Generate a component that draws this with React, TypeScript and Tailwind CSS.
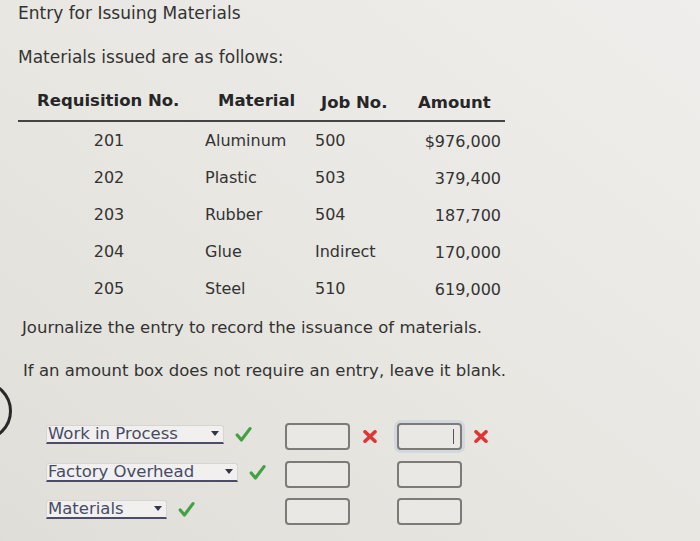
import React from "react";

const rows = [
  ["201", "Aluminum", "500", "$976,000"],
  ["202", "Plastic", "503", "379,400"],
  ["203", "Rubber", "504", "187,700"],
  ["204", "Glue", "Indirect", "170,000"],
  ["205", "Steel", "510", "619,000"],
];

function Check() {
  return (
    <svg width="17" height="17" viewBox="0 0 17 17" className="shrink-0">
      <path d="M2.2 9 L6.4 14 L15 2.6" fill="none" stroke="#45a045" strokeWidth="3.2" strokeLinecap="round" strokeLinejoin="round" />
    </svg>
  );
}

function Cross() {
  return (
    <svg width="14" height="13" viewBox="0 0 14 13" className="shrink-0">
      <path d="M2 1.8 L12 11.2 M12 1.8 L2 11.2" fill="none" stroke="#e03535" strokeWidth="3.6" strokeLinecap="round" />
    </svg>
  );
}

function Select({ label, width }: { label: string; width: string }) {
  return (
    <div
      className={`${width} h-[19px] flex items-end justify-between bg-[#f1f0ef] border border-[#d6d5d3] border-b-2 border-b-[#4a4d63] rounded-t-[3px] pl-[1px] pr-[4px] shrink-0`}
    >
      <span className="text-[16.5px] leading-[17px] text-[#474b66] whitespace-nowrap">{label}</span>
      <svg width="8" height="5" viewBox="0 0 8 5" className="mb-[6px]">
        <path d="M0 0 L8 0 L4 5 Z" fill="#33364a" />
      </svg>
    </div>
  );
}

function Box({ focused }: { focused?: boolean }) {
  return (
    <div
      className={`w-[65px] h-[27px] rounded-[4px] border-2 border-[#7c7b79] bg-[#e9e8e4] shrink-0 flex items-center justify-end pr-[6px] ${
        focused ? "ring-[3px] ring-[#d3d8de]" : ""
      }`}
    >
      {focused && <div className="w-[1.5px] h-[15px] bg-[#555]" />}
    </div>
  );
}

export default function App() {
  return (
    <div className="relative w-[700px] h-[541px] overflow-hidden bg-linear-to-tr from-[#e0ded8] via-[#e8e7e2] to-[#efeeec] font-['DejaVu_Sans',Verdana,sans-serif] text-[#333333] pl-[18px] pt-[3px]">
      {/* partial circle at left edge */}
      <div className="absolute left-[-48px] top-[381px] w-[60px] h-[60px] rounded-full border-[3px] border-[#2a2827]" />

      <div className="text-[17px] leading-[20px]">Entry for Issuing Materials</div>
      <div className="mt-[24px] text-[17px] leading-[20px]">Materials issued are as follows:</div>

      <div className="mt-[24px] w-[487px] grid grid-cols-[182px_105px_100px_100px] text-[16px] leading-[20px]">
        <div className="font-bold text-[16.5px] text-[#262626] pl-[19px] pb-[7px] border-b-2 border-[#444] whitespace-nowrap">Requisition No.</div>
        <div className="font-bold text-[16.5px] text-[#262626] pl-[18px] pb-[7px] border-b-2 border-[#444] whitespace-nowrap">Material</div>
        <div className="font-bold text-[16.5px] text-[#262626] pl-[16px] pb-[7px] border-b-2 border-[#444] whitespace-nowrap pt-[2px]">Job No.</div>
        <div className="font-bold text-[16.5px] text-[#262626] pl-[13px] pb-[7px] border-b-2 border-[#444] whitespace-nowrap pt-[2px]">Amount</div>
        {rows.map((r) => (
          <React.Fragment key={r[0]}>
            <div className="h-[37px] flex items-center justify-center">{r[0]}</div>
            <div className="h-[37px] flex items-center pl-[5px]">{r[1]}</div>
            <div className="h-[37px] flex items-center pl-[10px]">{r[2]}</div>
            <div className="h-[37px] flex items-center justify-end pr-[4px] pt-[3px]">{r[3]}</div>
          </React.Fragment>
        ))}
      </div>

      <div className="mt-[11px] ml-[4px] text-[16.5px] leading-[20px]">Journalize the entry to record the issuance of materials.</div>
      <div className="mt-[23px] ml-[5px] text-[16.5px] leading-[20px]">If an amount box does not require an entry, leave it blank.</div>

      <div className="mt-[41px] ml-[28px] flex flex-col">
        {[
          { label: "Work in Process", w: "w-[178px]", x: true },
          { label: "Factory Overhead", w: "w-[192px]", x: false },
          { label: "Materials", w: "w-[121px]", x: false },
        ].map((row, i) => (
          <div key={row.label} className="h-[37.5px] flex items-start">
            <div className="w-[239px] flex items-center gap-[11px] mt-[3px] shrink-0">
              <Select label={row.label} width={row.w} />
              <Check />
            </div>
            <div className="mt-[1px] flex items-start">
              <Box />
              <div className="w-[47px] h-[27px] flex items-center pl-[13px]">{row.x && <Cross />}</div>
              <Box focused={i === 0} />
              <div className="w-[40px] h-[27px] flex items-center pl-[12px]">{row.x && <Cross />}</div>
            </div>
          </div>
        ))}
      </div>
    </div>
  );
}
